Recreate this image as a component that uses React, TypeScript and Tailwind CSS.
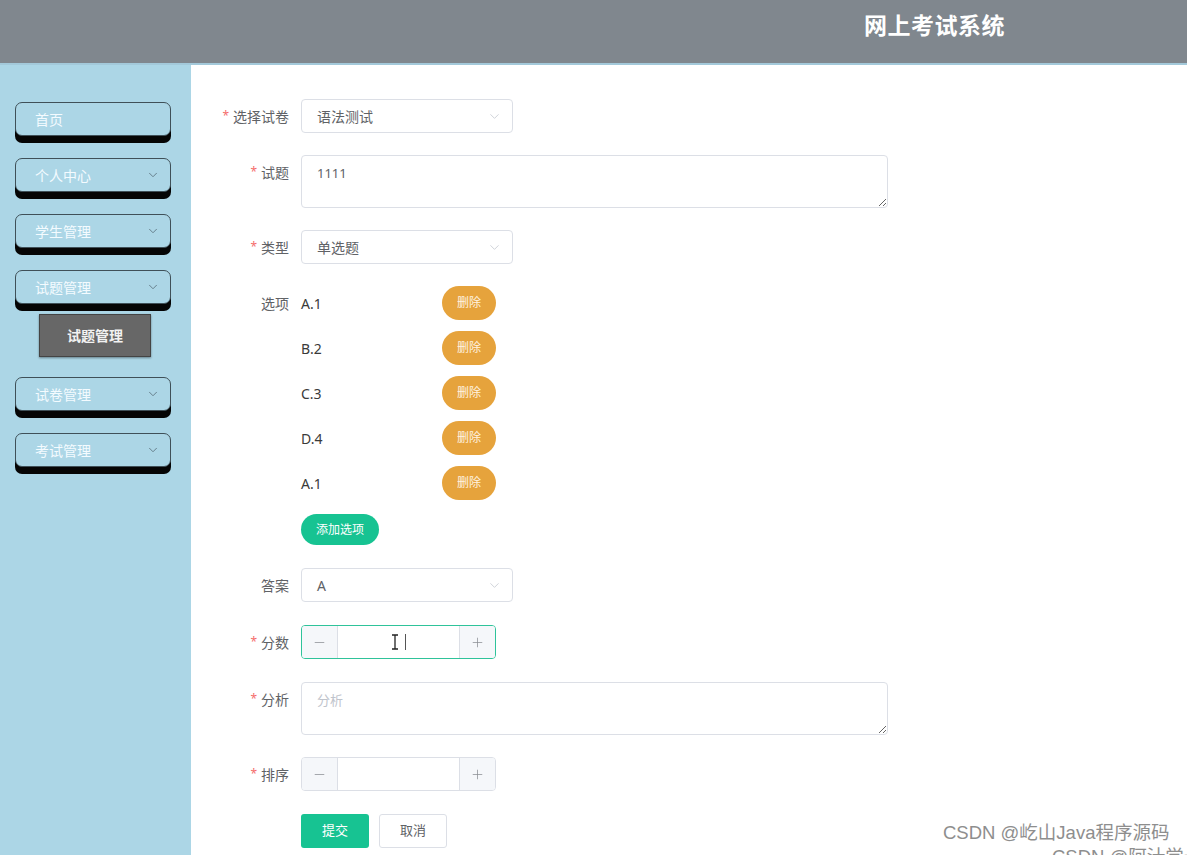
import { ChevronDown, Minus, Plus } from "lucide-react";
import { ReactNode } from "react";

const FONT = "font-['Noto_Sans','Noto_Sans_CJK_SC',sans-serif]";

const menus = [
  { name: "首页", arrow: false },
  { name: "个人中心", arrow: true },
  { name: "学生管理", arrow: true },
  { name: "试题管理", arrow: true, sub: ["试题管理"] },
  { name: "试卷管理", arrow: true },
  { name: "考试管理", arrow: true },
];

const options = ["A.1", "B.2", "C.3", "D.4", "A.1"];

function MenuItem({ name, arrow }: { name: string; arrow: boolean }) {
  return (
    <div className="h-[34px] w-[156px] rounded-[7px] border border-[#3f5058] bg-[#acd6e6] shadow-[0_7px_0_#050505] flex items-center pl-[19px] pr-[10px]">
      <span className="flex-1 text-[14px] text-[#f4fbff]">{name}</span>
      {arrow && <ChevronDown size={14} strokeWidth={1.5} className="text-[#5d7380]" />}
    </div>
  );
}

function Sidebar() {
  return (
    <aside className="w-[191px] shrink-0 bg-[#acd6e6] pt-[37px] pl-[15px]">
      {menus.map((m, i) => (
        <div key={i} className={m.sub ? "mb-[20px]" : "mb-[22px]"}>
          <MenuItem name={m.name} arrow={m.arrow} />
          {m.sub?.map((s) => (
            <div
              key={s}
              className="mt-[10px] ml-[24px] h-[43px] w-[112px] bg-[#676767] border border-[#444] shadow-[0_1px_2px_rgba(0,0,0,0.4)] flex items-center justify-center text-[14px] font-semibold text-[#f2f2f2]"
            >
              {s}
            </div>
          ))}
        </div>
      ))}
    </aside>
  );
}

function Row({
  label,
  required,
  children,
  mb = "mb-[22px]",
}: {
  label?: string;
  required?: boolean;
  children: ReactNode;
  mb?: string;
}) {
  return (
    <div className={`flex ${mb}`}>
      <div className="w-[110px] shrink-0 pr-[12px] h-[34px] flex items-center justify-end text-[14px] text-[#606266]">
        {required && <span className="text-[#f56c6c] mr-[4px] text-[12px]">*</span>}
        {label}
      </div>
      <div className="flex-1">{children}</div>
    </div>
  );
}

function SelectBox({ value }: { value: string }) {
  return (
    <div className="w-[212px] h-[34px] rounded-[4px] border border-[#dcdfe6] bg-white flex items-center pl-[15px] pr-[10px]">
      <span className="flex-1 text-[14px] text-[#606266]">{value}</span>
      <ChevronDown size={15} strokeWidth={1.2} className="text-[#c0c4cc]" />
    </div>
  );
}

function TextArea({ value, placeholder }: { value?: string; placeholder?: string }) {
  return (
    <textarea
      readOnly
      defaultValue={value}
      placeholder={placeholder}
      className="block w-[587px] h-[53px] rounded-[4px] border border-[#dcdfe6] px-[15px] py-[5px] text-[13px] leading-[24px] text-[#606266] placeholder:text-[#c0c4cc] outline-none"
    />
  );
}

function NumberBox({ focused, children }: { focused?: boolean; children?: ReactNode }) {
  return (
    <div
      className={`w-[195px] h-[34px] rounded-[4px] border flex overflow-hidden ${
        focused ? "border-[#2fc39a]" : "border-[#dcdfe6]"
      }`}
    >
      <div className="w-[36px] bg-[#f5f7fa] border-r border-[#dcdfe6] flex items-center justify-center text-[#8a8d93]">
        <Minus size={15} strokeWidth={1.2} />
      </div>
      <div className="flex-1 bg-white flex items-center justify-center">{children}</div>
      <div className="w-[36px] bg-[#f5f7fa] border-l border-[#dcdfe6] flex items-center justify-center text-[#8a8d93]">
        <Plus size={15} strokeWidth={1.2} />
      </div>
    </div>
  );
}

function Form() {
  return (
    <main className="flex-1 bg-white pt-[34px]">
      <Row label="选择试卷" required>
        <SelectBox value="语法测试" />
      </Row>
      <Row label="试题" required>
        <TextArea value="1111" />
      </Row>
      <Row label="类型" required>
        <SelectBox value="单选题" />
      </Row>
      <Row label="选项" mb="mb-[14px]">
        <div className="flex flex-col gap-[11px]">
          {options.map((o, i) => (
            <div key={i} className="h-[34px] flex items-center">
              <span className="w-[141px] text-[14px] text-[#3a3a3a]">{o}</span>
              <button className="w-[54px] h-[34px] rounded-full bg-[#e6a33c] text-[12px] text-[#fff3e0]">
                删除
              </button>
            </div>
          ))}
        </div>
      </Row>
      <div className="flex mb-[23px]">
        <div className="w-[110px] shrink-0" />
        <button className="w-[78px] h-[31px] rounded-full bg-[#17c392] text-[12px] text-white">添加选项</button>
      </div>
      <Row label="答案" mb="mb-[23px]">
        <SelectBox value="A" />
      </Row>
      <Row label="分数" required mb="mb-[23px]">
        <NumberBox focused>
          <div className="flex items-center gap-[6px] text-[#333]">
            <svg width="8" height="16" viewBox="0 0 8 16">
              <path d="M1 1h6M4 1v14M1 15h6" stroke="#222" strokeWidth="1.3" fill="none" />
            </svg>
            <span className="w-px h-[16px] bg-[#555]" />
          </div>
        </NumberBox>
      </Row>
      <Row label="分析" required>
        <TextArea placeholder="分析" />
      </Row>
      <Row label="排序" required mb="mb-[23px]">
        <NumberBox />
      </Row>
      <div className="flex">
        <div className="w-[110px] shrink-0" />
        <button className="w-[68px] h-[34px] rounded-[3px] bg-[#17c392] text-[13px] text-white">提交</button>
        <button className="ml-[10px] w-[68px] h-[34px] rounded-[3px] border border-[#dcdfe6] bg-white text-[13px] text-[#606266]">
          取消
        </button>
      </div>
    </main>
  );
}

export default function App() {
  return (
    <div className={`${FONT} relative w-[1187px] h-[855px] overflow-hidden flex flex-col bg-white`}>
      <header className="h-[65px] shrink-0 bg-[#80878e] border-b-2 border-[#a3c9da] flex justify-end pr-[182px] pt-[8px]">
        <h1 className="text-[23px] font-bold text-white tracking-[0.5px]">网上考试系统</h1>
      </header>
      <div className="flex flex-1 min-h-0">
        <Sidebar />
        <Form />
      </div>
      <div className="absolute left-[943px] top-[821px] whitespace-nowrap font-['Liberation_Sans','Noto_Sans_CJK_SC',sans-serif] text-[18.5px] leading-[24px] text-[#8e8e8e] [text-shadow:0_0_2px_#fff]">
        CSDN @屹山Java程序源码
      </div>
      <div className="absolute left-[1052px] top-[845px] whitespace-nowrap font-['Liberation_Sans','Noto_Sans_CJK_SC',sans-serif] text-[18.5px] leading-[24px] text-[#8e8e8e] [text-shadow:0_0_2px_#fff]">
        CSDN @阿汁学长
      </div>
    </div>
  );
}
